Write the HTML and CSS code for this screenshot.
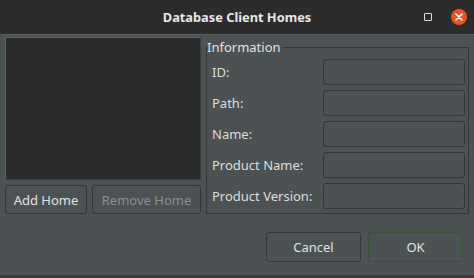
FILE: index.html
```html
<!DOCTYPE html>
<html lang="en">

<head>
    <meta charset="UTF-8">
    <meta name="viewport" content="width=device-width, initial-scale=1.0">
    <title>Database Client Homes</title>
    <link rel="stylesheet" href="styles.css">
</head>

<body>
    <div class="window">
        <div class="titlebar">
            <span></span>
            <span class="title">Database Client Homes</span>
            <div class="controls">
                <span class="maximize"></span>
                <span class="close">
                    <svg width="8" height="8" viewBox="0 0 8 8">
                        <path d="M1 1L7 7M7 1L1 7" stroke="#fff" stroke-width="1.6" stroke-linecap="round" />
                    </svg>
                </span>
            </div>
        </div>
        <div class="content">
            <div class="main">
                <div class="homes">
                    <div class="list"></div>
                    <div class="list-buttons">
                        <button class="btn add">Add Home</button>
                        <button class="btn remove" disabled>Remove Home</button>
                    </div>
                </div>
                <fieldset class="info">
                    <legend>Information</legend>
                    <div class="rows">
                        <label>ID:</label><input type="text">
                        <label>Path:</label><input type="text">
                        <label>Name:</label><input type="text">
                        <label>Product Name:</label><input type="text">
                        <label>Product Version:</label><input type="text">
                    </div>
                </fieldset>
            </div>
            <div class="actions">
                <button class="btn cancel">Cancel</button>
                <button class="btn ok">OK</button>
            </div>
        </div>
    </div>
</body>

</html>
```

FILE: styles.css
```css
* {
    margin: 0;
    padding: 0;
    box-sizing: border-box;
}

body {
    width: 474px;
    height: 278px;
    background: #3a3d3f;
    font-family: "Noto Sans", "Open Sans", sans-serif;
    font-size: 13px;
    color: #dedede;
    overflow: hidden;
}

.window {
    height: 275px;
    background: #4c5154;
    display: flex;
    flex-direction: column;
}

.titlebar {
    height: 35px;
    background: #2c2c2c;
    border-bottom: 1px solid #5a5f62;
    display: grid;
    grid-template-columns: 1fr auto 1fr;
    align-items: center;
}

.title {
    font-weight: bold;
    font-size: 12.8px;
    color: #e8e8e8;
}

.controls {
    display: flex;
    justify-content: flex-end;
    align-items: center;
    gap: 19px;
    padding-right: 7px;
}

.maximize {
    width: 8px;
    height: 8px;
    border: 1.5px solid #e0e0e0;
    border-radius: 1px;
}

.close {
    width: 16px;
    height: 16px;
    border-radius: 50%;
    background: #e95420;
    display: flex;
    align-items: center;
    justify-content: center;
}

.content {
    flex: 1;
    padding: 2px 5px 0 5px;
    display: flex;
    flex-direction: column;
}

.main {
    display: flex;
    gap: 5px;
}

.homes {
    width: 196px;
    display: flex;
    flex-direction: column;
    gap: 5px;
}

.list {
    height: 143px;
    background: #2b2b2b;
    border: 1px solid #3a3d3f;
    border-left-color: #5d6265;
    border-top-color: #5d6265;
}

.list-buttons {
    display: flex;
    gap: 5px;
}

.btn {
    font: inherit;
    color: #e3e3e3;
    background: #4c5154;
    border: 1px solid #34373a;
    border-radius: 3px;
    height: 29px;
}

.add {
    width: 82px;
}

.remove {
    width: 109px;
    color: #8b8f92;
}

.info {
    width: 264px;
    border: 1px solid #34373a;
    padding: 3px 3px 3px 5px;
    margin-top: 1px;
}

.info legend {
    padding: 0 2px 0 0;
    margin-left: -5px;
    color: #e3e3e3;
}

.rows {
    display: grid;
    grid-template-columns: 1fr 142px;
    row-gap: 5px;
    align-items: center;
}

.rows input {
    height: 26px;
    background: #4c5154;
    border: 1px solid #34373a;
    border-radius: 3px;
    color: #e3e3e3;
    font: inherit;
}

.actions {
    display: flex;
    justify-content: flex-end;
    gap: 7px;
    margin-top: 18px;
    padding-right: 6px;
}

.cancel,
.ok {
    width: 95px;
    height: 30px;
}

.ok {
    border-color: #375237;
}
```
